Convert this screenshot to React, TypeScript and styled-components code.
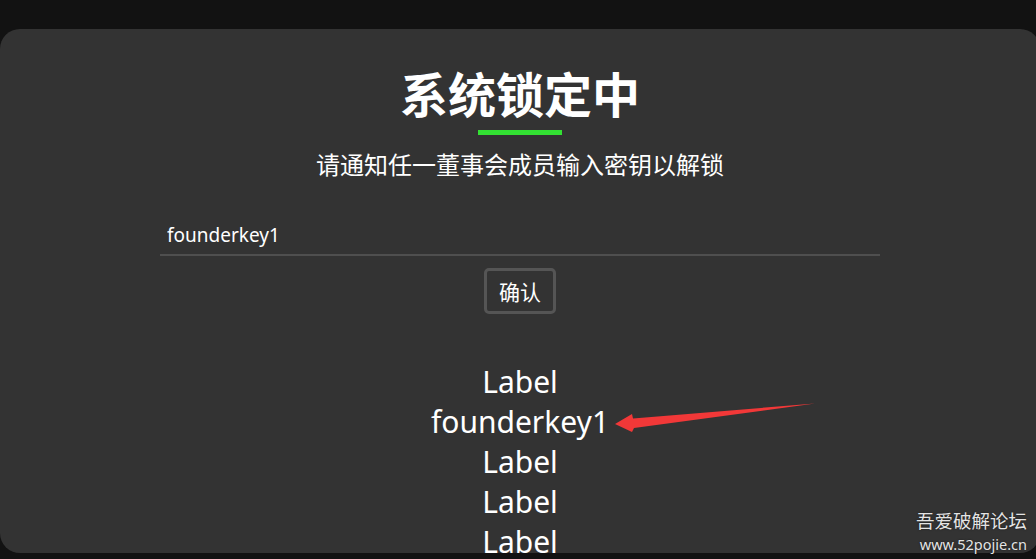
import React from "react";
import styled, { createGlobalStyle } from "styled-components";

const GlobalStyle = createGlobalStyle`
  html, body {
    margin: 0;
    padding: 0;
    background: #121212;
    overflow: hidden;
    width: 1036px;
    height: 559px;
  }
  * { box-sizing: border-box; }
`;

const Page = styled.div`
  position: relative;
  width: 1036px;
  height: 559px;
  padding-top: 29px;
  font-family: "Noto Sans", "Noto Sans CJK SC", sans-serif;
`;

const Panel = styled.div`
  width: 1040px;
  height: 524px;
  background: #333333;
  border-radius: 20px;
  overflow: hidden;
  display: flex;
  flex-direction: column;
  align-items: center;
  padding-top: 31px;
  color: #ffffff;
`;

const Title = styled.h1`
  flex-shrink: 0;
  margin: 0;
  font-family: "Noto Sans CJK SC", sans-serif;
  font-size: 48px;
  line-height: 64px;
  font-weight: 700;
`;

const Accent = styled.div`
  flex-shrink: 0;
  width: 84px;
  height: 5px;
  margin-top: 6px;
  background: #33e133;
`;

const Subtitle = styled.p`
  flex-shrink: 0;
  margin: 13px 0 0;
  font-family: "Noto Sans CJK SC", sans-serif;
  font-size: 24px;
  line-height: 32px;
`;

const KeyInput = styled.input`
  flex-shrink: 0;
  margin-top: 36px;
  width: 720px;
  height: 40px;
  padding: 0 7px;
  border: none;
  border-bottom: 2px solid #4f4f4f;
  background: transparent;
  color: #ffffff;
  font-family: "Noto Sans", "Noto Sans CJK SC", sans-serif;
  font-size: 19px;
  outline: none;
`;

const ConfirmButton = styled.button`
  flex-shrink: 0;
  margin-top: 12px;
  width: 72px;
  height: 46px;
  border: 3px solid #555555;
  border-radius: 5px;
  background: transparent;
  color: #ffffff;
  font-family: "Noto Sans CJK SC", sans-serif;
  font-size: 21px;
  padding: 0;
`;

const LabelList = styled.div`
  flex-shrink: 0;
  margin-top: 48px;
  display: flex;
  flex-direction: column;
  align-items: center;
`;

const LabelText = styled.div`
  font-family: "Noto Sans", sans-serif;
  font-size: 30px;
  line-height: 40px;
  color: #ffffff;
`;

const Arrow = styled.svg`
  position: absolute;
  left: 0;
  top: 0;
  pointer-events: none;
`;

const Watermark = styled.div`
  position: absolute;
  right: 9px;
  bottom: 5px;
  display: flex;
  flex-direction: column;
  align-items: flex-end;
  color: #e4e4e4;
  text-shadow: 0 0 2px rgba(0, 0, 0, 0.6);
`;

const WatermarkName = styled.div`
  font-family: "Noto Sans CJK SC", sans-serif;
  font-size: 18.5px;
  line-height: 27px;
`;

const WatermarkUrl = styled.div`
  font-family: "Noto Sans", sans-serif;
  font-size: 14.5px;
  line-height: 20px;
`;

const labels = ["Label", "founderkey1", "Label", "Label", "Label"];

export default function App() {
  return (
    <>
      <GlobalStyle />
      <Page>
        <Panel>
          <Title>系统锁定中</Title>
          <Accent />
          <Subtitle>请通知任一董事会成员输入密钥以解锁</Subtitle>
          <KeyInput defaultValue="founderkey1" />
          <ConfirmButton>确认</ConfirmButton>
          <LabelList>
            {labels.map((l, i) => (
              <LabelText key={i}>{l}</LabelText>
            ))}
          </LabelList>
        </Panel>
        <Arrow width="1036" height="559" viewBox="0 0 1036 559">
          <polygon
            points="615,424 632,414 633,418.5 815,403.5 634,428 632,432"
            fill="#f23838"
          />
        </Arrow>
        <Watermark>
          <WatermarkName>吾爱破解论坛</WatermarkName>
          <WatermarkUrl>www.52pojie.cn</WatermarkUrl>
        </Watermark>
      </Page>
    </>
  );
}
